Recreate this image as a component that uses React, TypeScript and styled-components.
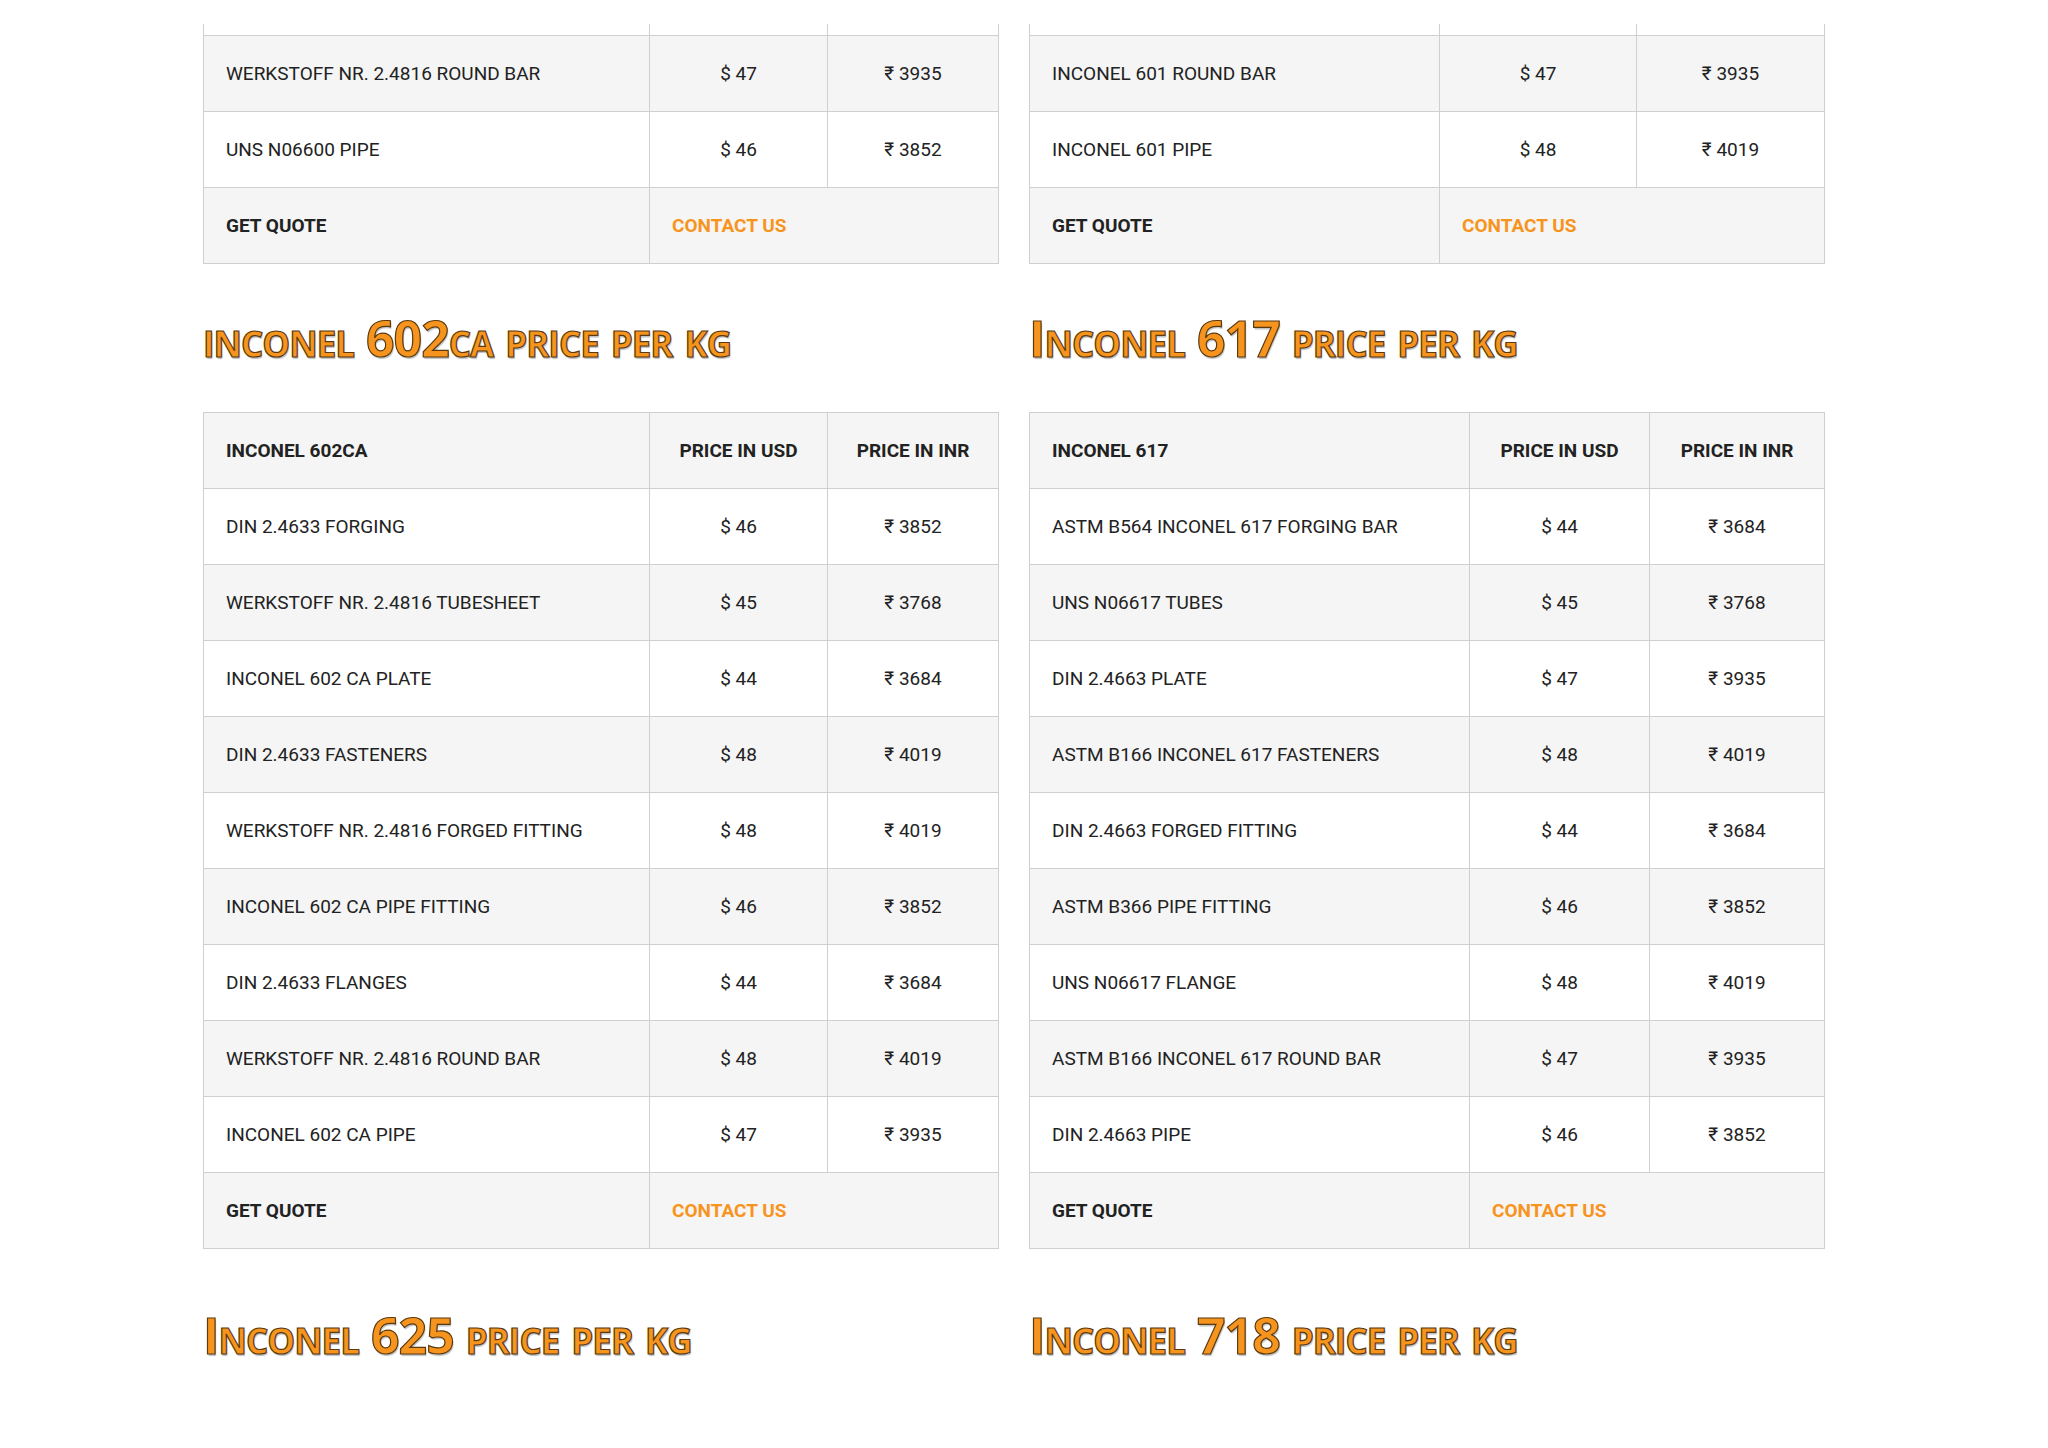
import { createGlobalStyle, styled } from "styled-components";

const Global = createGlobalStyle`
  body { margin: 0; background: #fff; font-family: Roboto, "Liberation Sans", sans-serif; }
`;

const Page = styled.div`
  width: 1622px;
  margin-left: 203px;
  display: grid;
  grid-template-columns: 796px 796px;
  column-gap: 30px;
  padding-top: 24px;
`;

const Column = styled.div`
  display: flex;
  flex-direction: column;
`;

const Heading = styled.h2`
  margin: 0;
  height: 148px;
  display: flex;
  align-items: center;
  font-family: "Open Sans", "DejaVu Sans", sans-serif;
  font-variant: small-caps;
  font-weight: 700;
  font-size: 50px;
  letter-spacing: -1px;
  color: #f7941d;
  -webkit-text-stroke: 1.2px #5a3a10;
  text-shadow: 1px 2px 1px rgba(0, 0, 0, 0.25);
`;

const BottomHeading = styled(Heading)`
  height: 172px;
`;

const Table = styled.table<{ $cols: number[] }>`
  width: 100%;
  border-collapse: collapse;
  table-layout: fixed;
  font-size: 19px;
  color: #222;
  col:nth-child(1) { width: ${(p) => p.$cols[0]}px; }
  col:nth-child(2) { width: ${(p) => p.$cols[1]}px; }
`;

const Row = styled.tr<{ $shade?: boolean; $cut?: boolean }>`
  height: ${(p) => (p.$cut ? 11 : 76)}px;
  background: ${(p) => (p.$shade ? "#f5f5f5" : "#fff")};
`;

const Cell = styled.td<{ $center?: boolean; $bold?: boolean; $accent?: boolean; $cut?: boolean }>`
  border: 1px solid #cfcfcf;
  ${(p) => (p.$cut ? "border-top: none;" : "")}
  padding: 0 22px;
  text-align: ${(p) => (p.$center ? "center" : "left")};
  font-weight: ${(p) => (p.$bold || p.$accent ? 700 : 400)};
  color: ${(p) => (p.$accent ? "#f7941d" : "#222")};
  white-space: nowrap;
`;

type Item = [string, string, string];

function PriceTable({ cols, head, rows, cut, startShade }: { cols: number[]; head?: string; rows: Item[]; cut?: boolean; startShade?: boolean }) {
  return (
    <Table $cols={cols}>
      <colgroup><col /><col /><col /></colgroup>
      <tbody>
        {cut && (
          <Row $cut>
            <Cell $cut /><Cell $cut /><Cell $cut />
          </Row>
        )}
        {head && (
          <Row $shade>
            <Cell $bold>{head}</Cell>
            <Cell $bold $center>PRICE IN USD</Cell>
            <Cell $bold $center>PRICE IN INR</Cell>
          </Row>
        )}
        {rows.map((r, i) => (
          <Row key={i} $shade={startShade ? i % 2 === 0 : i % 2 === 1}>
            <Cell>{r[0]}</Cell>
            <Cell $center>{r[1]}</Cell>
            <Cell $center>{r[2]}</Cell>
          </Row>
        ))}
        <Row $shade>
          <Cell $bold>GET QUOTE</Cell>
          <Cell $accent colSpan={2}>CONTACT US</Cell>
        </Row>
      </tbody>
    </Table>
  );
}

const rows602: Item[] = [
  ["DIN 2.4633 FORGING", "$ 46", "₹ 3852"],
  ["WERKSTOFF NR. 2.4816 TUBESHEET", "$ 45", "₹ 3768"],
  ["INCONEL 602 CA PLATE", "$ 44", "₹ 3684"],
  ["DIN 2.4633 FASTENERS", "$ 48", "₹ 4019"],
  ["WERKSTOFF NR. 2.4816 FORGED FITTING", "$ 48", "₹ 4019"],
  ["INCONEL 602 CA PIPE FITTING", "$ 46", "₹ 3852"],
  ["DIN 2.4633 FLANGES", "$ 44", "₹ 3684"],
  ["WERKSTOFF NR. 2.4816 ROUND BAR", "$ 48", "₹ 4019"],
  ["INCONEL 602 CA PIPE", "$ 47", "₹ 3935"],
];

const rows617: Item[] = [
  ["ASTM B564 INCONEL 617 FORGING BAR", "$ 44", "₹ 3684"],
  ["UNS N06617 TUBES", "$ 45", "₹ 3768"],
  ["DIN 2.4663 PLATE", "$ 47", "₹ 3935"],
  ["ASTM B166 INCONEL 617 FASTENERS", "$ 48", "₹ 4019"],
  ["DIN 2.4663 FORGED FITTING", "$ 44", "₹ 3684"],
  ["ASTM B366 PIPE FITTING", "$ 46", "₹ 3852"],
  ["UNS N06617 FLANGE", "$ 48", "₹ 4019"],
  ["ASTM B166 INCONEL 617 ROUND BAR", "$ 47", "₹ 3935"],
  ["DIN 2.4663 PIPE", "$ 46", "₹ 3852"],
];

export default function App() {
  return (
    <>
      <Global />
      <Page>
        <Column>
          <PriceTable cut startShade cols={[446, 178]} rows={[
            ["WERKSTOFF NR. 2.4816 ROUND BAR", "$ 47", "₹ 3935"],
            ["UNS N06600 PIPE", "$ 46", "₹ 3852"],
          ]} />
          <Heading>inconel 602ca price per kg</Heading>
          <PriceTable cols={[446, 178]} head="INCONEL 602CA" rows={rows602} />
          <BottomHeading>Inconel 625 price per kg</BottomHeading>
        </Column>
        <Column>
          <PriceTable cut startShade cols={[410, 197]} rows={[
            ["INCONEL 601 ROUND BAR", "$ 47", "₹ 3935"],
            ["INCONEL 601 PIPE", "$ 48", "₹ 4019"],
          ]} />
          <Heading>Inconel 617 price per kg</Heading>
          <PriceTable cols={[440, 180]} head="INCONEL 617" rows={rows617} />
          <BottomHeading>Inconel 718 price per kg</BottomHeading>
        </Column>
      </Page>
    </>
  );
}
